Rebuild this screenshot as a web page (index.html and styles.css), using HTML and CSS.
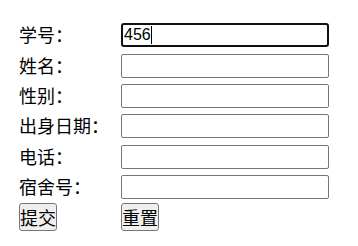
FILE: index.html
```html
<!DOCTYPE html>
<html lang="zh">
<head>
<meta charset="utf-8">
<title>学生信息</title>
<link rel="stylesheet" href="styles.css">
</head>
<body>
<form class="form">
  <label class="label">学号：</label>
  <div class="field focused"><span class="value">456</span><span class="caret"></span></div>
  <label class="label">姓名：</label>
  <input class="field" type="text">
  <label class="label">性别：</label>
  <input class="field" type="text">
  <label class="label">出身日期：</label>
  <input class="field" type="text">
  <label class="label">电话：</label>
  <input class="field" type="text">
  <label class="label">宿舍号：</label>
  <input class="field" type="text">
  <div class="cell"><button class="btn" type="button">提交</button></div>
  <div class="cell"><button class="btn" type="button">重置</button></div>
</form>
</body>
</html>
```
FILE: styles.css
```css
html, body {
  margin: 0;
  padding: 0;
  background: #fff;
}
body {
  font-family: "Noto Sans CJK SC", "Liberation Sans", sans-serif;
  font-size: 18px;
  color: #000;
}
.form {
  display: grid;
  grid-template-columns: 102px 208px;
  grid-auto-rows: 28.5px;
  row-gap: 1.9px;
  align-items: center;
  padding: 21px 0 0 19px;
}
.label {
  font-size: 18px;
  line-height: 26px;
  white-space: nowrap;
  padding-bottom: 2px;
}
.field {
  box-sizing: border-box;
  width: 208px;
  height: 24px;
  margin: 0;
  padding: 1px 2px;
  border: 1px solid #767676;
  border-radius: 2px;
  background: #fff;
  font-family: "Liberation Sans", sans-serif;
  font-size: 16px;
  color: #000;
  outline: none;
}
.focused {
  display: flex;
  align-items: center;
  border: 2px solid #101010;
  border-radius: 3px;
  padding: 0 2px 0 1px;
}
.value {
  line-height: 18px;
}
.caret {
  display: inline-block;
  width: 1px;
  height: 18px;
  background: #000;
}
.cell {
  align-self: start;
}
.btn {
  box-sizing: border-box;
  height: 28px;
  margin: 0;
  padding: 0;
  border: 1px solid #767676;
  border-radius: 3px;
  background: #efefef;
  font-family: "Noto Sans CJK SC", sans-serif;
  font-size: 18px;
  line-height: 24px;
  color: #000;
}
```
